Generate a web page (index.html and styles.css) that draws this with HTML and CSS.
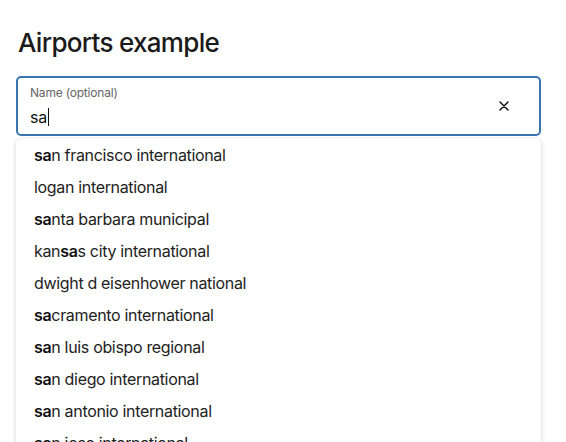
FILE: index.html
```html
<!DOCTYPE html>
<html>
<head>
<meta charset="utf-8">
<link rel="stylesheet" href="styles.css">
</head>
<body>
<div class="page">
  <h1 class="title">Airports example</h1>
  <div class="combo">
    <div class="field">
      <div class="field-text">
        <label class="label">Name (optional)</label>
        <div class="value">sa<span class="caret"></span></div>
      </div>
      <button class="clear" aria-label="Clear">
        <svg width="10" height="10" viewBox="0 0 10 10"><path d="M1 1L9 9M9 1L1 9" stroke="#111" stroke-width="1.5" stroke-linecap="round"/></svg>
      </button>
    </div>
    <ul class="menu">
      <li class="item"><b>sa</b>n francisco international</li>
      <li class="item">logan international</li>
      <li class="item"><b>sa</b>nta barbara municipal</li>
      <li class="item">kan<b>sa</b>s city international</li>
      <li class="item">dwight d eisenhower national</li>
      <li class="item"><b>sa</b>cramento international</li>
      <li class="item"><b>sa</b>n luis obispo regional</li>
      <li class="item"><b>sa</b>n diego international</li>
      <li class="item"><b>sa</b>n antonio international</li>
      <li class="item"><b>sa</b>n jose international</li>
    </ul>
  </div>
</div>
</body>
</html>
```

FILE: styles.css
```css
html, body {
  margin: 0;
  padding: 0;
  background: #fff;
  height: 100%;
  overflow: hidden;
}
body {
  font-family: Inter, "Liberation Sans", sans-serif;
  color: #222;
}
.page {
  padding: 27px 25px 0 16px;
}
.title {
  margin: 0 0 17px 2px;
  font-size: 26px;
  line-height: 32px;
  font-weight: 500;
  color: #1a1a1a;
  letter-spacing: -0.7px;
}
.combo {
  display: flex;
  flex-direction: column;
  gap: 3px;
}
.field {
  height: 56px;
  border: 2px solid #3a75b0;
  border-radius: 5px;
  display: flex;
  align-items: center;
  padding: 0 30px 0 12px;
}
.field-text {
  flex: 1;
  display: flex;
  flex-direction: column;
  gap: 7px;
}
.label {
  font-size: 12px;
  line-height: 15px;
  color: #666;
  letter-spacing: -0.2px;
}
.value {
  font-size: 16px;
  line-height: 20px;
  color: #111;
  display: flex;
  align-items: center;
  letter-spacing: -0.3px;
}
.caret {
  display: inline-block;
  width: 1px;
  height: 18px;
  background: #111;
  margin-left: 1px;
}
.clear {
  border: 0;
  background: transparent;
  padding: 0;
  width: 10px;
  height: 10px;
  display: flex;
}
.menu {
  list-style: none;
  margin: 0;
  padding: 0;
  background: #fff;
  border-radius: 5px;
  box-shadow: 0 1px 5px rgba(0,0,0,0.18);
}
.item {
  height: 32px;
  line-height: 32px;
  padding-left: 18px;
  font-size: 16px;
  color: #222;
  letter-spacing: -0.33px;
}
.item b {
  font-weight: 600;
  color: #111;
}
```
